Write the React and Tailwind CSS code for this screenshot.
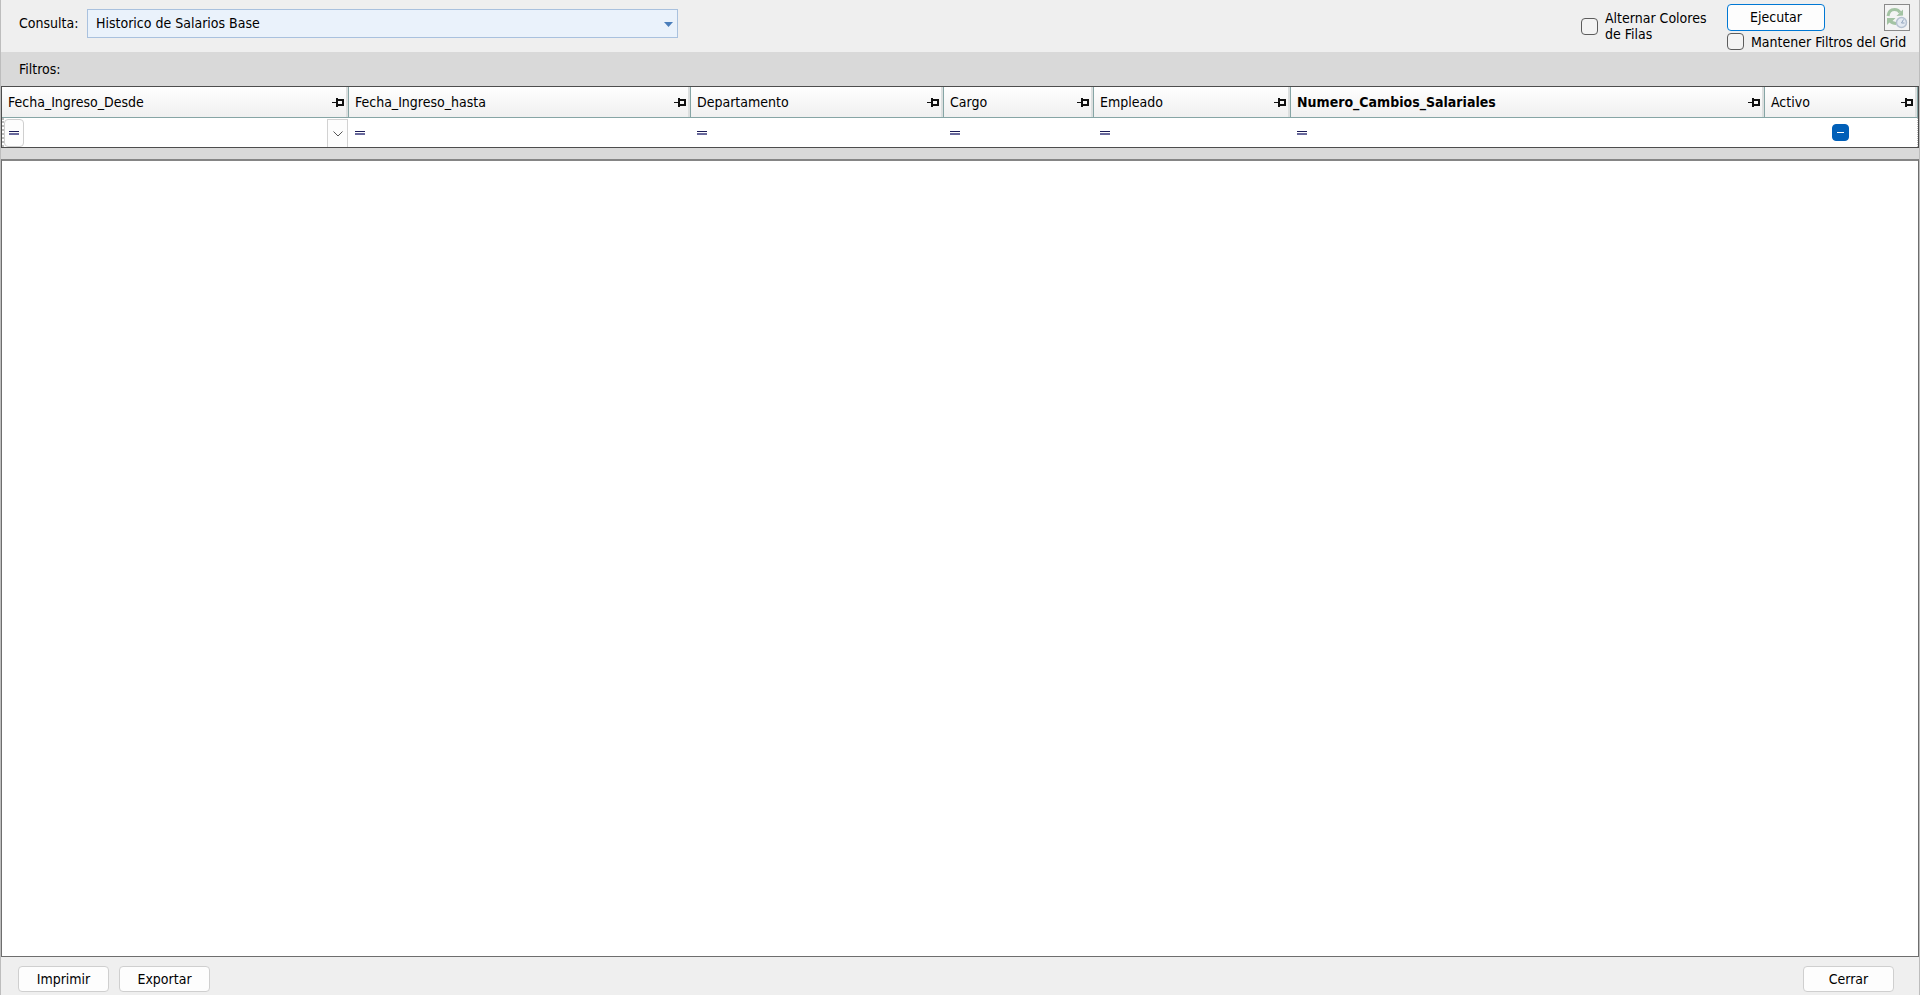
import React, { useEffect, useRef, useState } from 'react';

const columns = [
  { name: 'Fecha_Ingreso_Desde', width: 'w-[347px]', type: 'date' },
  { name: 'Fecha_Ingreso_hasta', width: 'w-[342px]', type: 'text' },
  { name: 'Departamento', width: 'w-[253px]', type: 'text' },
  { name: 'Cargo', width: 'w-[150px]', type: 'text' },
  { name: 'Empleado', width: 'w-[197px]', type: 'text' },
  { name: 'Numero_Cambios_Salariales', width: 'w-auto', type: 'text', required: true },
  { name: 'Activo', width: 'w-[153px]', type: 'check' },
];

const PinIcon = () => (
  <svg width="12" height="9" viewBox="0 0 12 9" shapeRendering="crispEdges" aria-hidden="true">
    <path d="M0 4h5v1H0zM4 0h2v9H4zM5 1h7v2H5zM5 6h7v2H5zM10 1h2v7h-2z" fill="#111" />
  </svg>
);

const EqualsIcon = () => (
  <svg width="10" height="4" viewBox="0 0 10 4" shapeRendering="crispEdges" aria-hidden="true">
    <path d="M0 0h10v1H0z" fill="#1c1c58" />
    <path d="M0 2h10v2H0z" fill="#69699c" />
  </svg>
);

const RefreshClockIcon = () => (
  <svg width="22" height="22" viewBox="0 0 22 22" fill="none" aria-hidden="true">
    <path d="M2 9C2.500 5 5 2.500 8.500 2.500c2.500 0 4.500 1 5.500 3" stroke="#a3c3a3" strokeWidth="3" />
    <path d="M10.500 9l6.500-0.500V2.500z" fill="#a3c3a3" />
    <path d="M1 11h8.500l-3 3 3.500 1v3c-3 0-5-1-6.500-2.500L1 18z" fill="#a3c3a3" />
    <circle cx="15.500" cy="15.500" r="5" fill="#e3e9f1" stroke="#b5c1d0" strokeWidth="1.500" />
    <path d="M17.500 12.500l-2 3.500h3" stroke="#8fa3bc" />
  </svg>
);

const TriStateCheck = ({ label }) => {
  const ref = useRef(null);

  useEffect(() => {
    ref.current.indeterminate = true;
  }, []);

  return (
    <span className="relative flex h-[17px] w-[17px]">
      <input
        ref={ref}
        type="checkbox"
        aria-label={label}
        className="h-[17px] w-[17px] appearance-none rounded border border-[#5f5f5f] bg-white indeterminate:border-[#005fb8] indeterminate:bg-[#005fb8]"
      />
      <span className="pointer-events-none absolute top-2 left-[5px] h-px w-[7px] bg-white" />
    </span>
  );
};

const CheckBox = ({ id }) => (
  <input
    id={id}
    type="checkbox"
    className="h-[17px] w-[17px] shrink-0 appearance-none rounded border border-[#5c5c5c] bg-[#f3f3f3] checked:bg-[#005fb8]"
  />
);

const FooterButton = ({ children }) => (
  <button type="button" className="h-[26px] w-[91px] rounded border border-[#cfcfcf] bg-[#fdfdfd]">
    {children}
  </button>
);

const FilterCell = ({ column }) => {
  if (column.type === 'check') {
    return (
      <div className="flex h-[29px] items-start justify-center border-r border-dotted border-[#bbb] pt-[6px] pr-px">
        <TriStateCheck label={column.name} />
      </div>
    );
  }

  if (column.type === 'date') {
    return (
      <div className="flex h-[29px] items-stretch border-l-2 border-dotted border-[#bbb] pt-px pr-px">
        <button type="button" aria-label="Operador" className="flex w-5 items-center justify-center rounded border border-[#cfcfcf] bg-[#fdfdfd]">
          <EqualsIcon />
        </button>
        <input aria-label={column.name} className="min-w-0 flex-1 px-1 outline-none" />
        <button type="button" aria-label="Abrir calendario" className="flex w-[21px] items-center justify-center border border-b-0 border-[#d2d2d2] bg-[#fdfdfd]">
          <svg width="10" height="6" viewBox="0 0 10 6" fill="none" stroke="#555" aria-hidden="true">
            <path d="M0.500 0.500L5 5l4.500-4.500" />
          </svg>
        </button>
      </div>
    );
  }

  return (
    <div className="flex h-[29px] items-center pt-px pl-[6px]">
      <button type="button" aria-label="Operador" className="flex h-5 items-center">
        <EqualsIcon />
      </button>
      <input aria-label={column.name} className="min-w-0 flex-1 px-1 outline-none" />
    </div>
  );
};

const Toolbar = () => {
  const [query, setQuery] = useState('Historico de Salarios Base');

  return (
    <header className="flex h-[52px] shrink-0 items-start justify-between pr-[9px] pl-[18px]">
      <div className="flex items-center pt-[9px]">
        <label htmlFor="consulta" className="w-[68px]">Consulta:</label>
        <div className="relative">
          <select
            id="consulta"
            value={query}
            onChange={(e) => setQuery(e.target.value)}
            className="h-[29px] w-[591px] appearance-none border border-[#a9c1de] bg-[#eaf2fb] pb-px pl-2 outline-none"
          >
            <option>Historico de Salarios Base</option>
          </select>
          <svg className="pointer-events-none absolute top-[13px] right-[5px]" width="9" height="5" viewBox="0 0 9 5" aria-hidden="true">
            <path d="M0 0h9L4.500 5z" fill="#4a7ebb" />
          </svg>
        </div>
      </div>

      <div className="flex items-start">
        <div className="flex items-center gap-[7px] pt-[10px]">
          <CheckBox id="alternar" />
          <label htmlFor="alternar" className="mr-3 w-[110px] leading-4">Alternar Colores de Filas</label>
        </div>
        <div className="flex flex-col gap-[2px] pt-1">
          <div className="flex items-start justify-between">
            <button type="button" className="h-[27px] w-[98px] rounded border border-[#0078d4] bg-[#fdfdfd]">
              Ejecutar
            </button>
            <button type="button" aria-label="Actualizar" className="flex h-[27px] w-[26px] items-center justify-center border border-[#8a8a8a] bg-[#f4f4f4]">
              <RefreshClockIcon />
            </button>
          </div>
          <div className="flex items-center gap-[7px]">
            <CheckBox id="mantener" />
            <label htmlFor="mantener" className="w-[159px] leading-4 whitespace-nowrap">Mantener Filtros del Grid</label>
          </div>
        </div>
      </div>
    </header>
  );
};

const FilterGrid = () => (
  <section className="shrink-0 bg-[#d9d9d9] pb-[11px]">
    <h2 className="flex h-[34px] items-center pl-[18px]">Filtros:</h2>
    <div className="border border-[#4d4d4d] bg-white">
      <table className="w-full table-fixed border-collapse">
        <thead>
          <tr>
            {columns.map((column) => (
              <th key={column.name} className={`${column.width} p-0 text-left font-normal`}>
                <div className="flex h-[31px] items-center justify-between border-r border-b border-[#86a5a5] bg-linear-to-b from-white to-[#f0f0f0] pr-1 pl-[6px] shadow-[inset_-2px_0_0_#dcdfdf]">
                  <span className={column.required ? 'font-bold' : ''}>{column.name}</span>
                  <PinIcon />
                </div>
              </th>
            ))}
          </tr>
        </thead>
        <tbody>
          <tr>
            {columns.map((column) => (
              <td key={column.name} className="p-0">
                <FilterCell column={column} />
              </td>
            ))}
          </tr>
        </tbody>
      </table>
    </div>
  </section>
);

const App = () => {
  return (
    <div className="flex h-screen flex-col border-x border-[#bdbdbd] bg-[#efefef] font-['DejaVu_Sans_Condensed','Noto_Sans',sans-serif] text-[14px] text-black">
      <Toolbar />
      <FilterGrid />
      <main className="min-h-0 flex-1 border border-t-2 border-[#6e6e6e] border-t-[#858585] bg-white" />
      <footer className="flex shrink-0 items-center justify-between pt-[9px] pr-[25px] pb-[3px] pl-[17px]">
        <div className="flex gap-[10px]">
          <FooterButton>Imprimir</FooterButton>
          <FooterButton>Exportar</FooterButton>
        </div>
        <FooterButton>Cerrar</FooterButton>
      </footer>
    </div>
  );
};

export default App;
